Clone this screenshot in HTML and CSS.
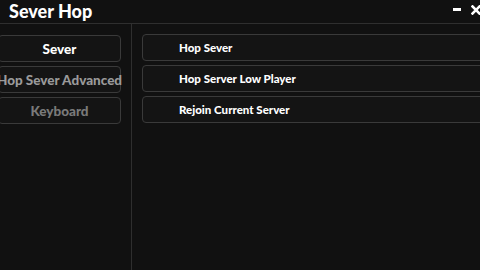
FILE: index.html
```html
<!DOCTYPE html>
<html>
<head>
<meta charset="utf-8">
<link rel="stylesheet" href="styles.css">
</head>
<body>
<div class="window">
  <header class="titlebar">
    <div class="title">Sever Hop</div>
    <div class="controls">
      <span class="minimize"></span>
      <svg class="close" width="10" height="10" viewBox="0 0 10 10"><path d="M1.5 1.5 L8.5 8.5 M8.5 1.5 L1.5 8.5" stroke="#fff" stroke-width="2.6" stroke-linecap="square"/></svg>
    </div>
  </header>
  <main class="body">
    <nav class="sidebar">
      <div class="tab active">Sever</div>
      <div class="tab dim">Hop Sever Advanced</div>
      <div class="tab dimmer">Keyboard</div>
    </nav>
    <section class="content">
      <div class="item">Hop Sever</div>
      <div class="item">Hop Server Low Player</div>
      <div class="item">Rejoin Current Server</div>
    </section>
  </main>
</div>
</body>
</html>
```
FILE: styles.css
```css
html, body {
  margin: 0;
  padding: 0;
  background: #111111;
  width: 480px;
  height: 270px;
  overflow: hidden;
  font-family: "Lato", "Noto Sans", sans-serif;
}
.window {
  display: flex;
  flex-direction: column;
  height: 270px;
}
.titlebar {
  height: 23px;
  border-bottom: 1px solid #2f2f2f;
  display: flex;
  align-items: center;
  justify-content: space-between;
  padding-left: 9px;
}
.title {
  color: #ffffff;
  font-weight: 900;
  font-size: 18px;
  margin-top: -1px;
}
.controls {
  display: flex;
  align-items: center;
  gap: 10px;
  margin-right: -1px;
  margin-top: -4px;
}
.minimize {
  display: block;
  width: 8px;
  height: 3px;
  background: #fff;
}
.close {
  display: block;
}
.body {
  flex: 1;
  display: flex;
  min-width: 0;
}
.sidebar {
  flex: 0 0 132px;
  box-sizing: border-box;
  border-right: 1px solid #2f2f2f;
  padding-top: 11px;
  display: flex;
  flex-direction: column;
  gap: 4px;
}
.tab {
  margin-left: -2px;
  width: 123px;
  height: 27px;
  box-sizing: border-box;
  border: 1px solid #3a3a3a;
  border-radius: 4px;
  background: #141414;
  display: flex;
  align-items: center;
  justify-content: center;
  font-weight: 900;
  font-size: 13.5px;
  white-space: nowrap;
}
.tab.active { color: #ffffff; }
.tab.dim { color: #9a9a9a; }
.tab.dimmer { color: #7a7a7a; }
.content {
  flex: 1 1 0;
  min-width: 0;
  padding-top: 10px;
  padding-left: 10px;
  display: flex;
  flex-direction: column;
  gap: 4px;
}
.item {
  width: 360px;
  flex-shrink: 0;
  height: 27px;
  box-sizing: border-box;
  border: 1px solid #3a3a3a;
  border-radius: 4px;
  background: #141414;
  display: flex;
  align-items: center;
  padding-left: 36px;
  color: #ffffff;
  font-weight: 900;
  font-size: 11.5px;
}
```
